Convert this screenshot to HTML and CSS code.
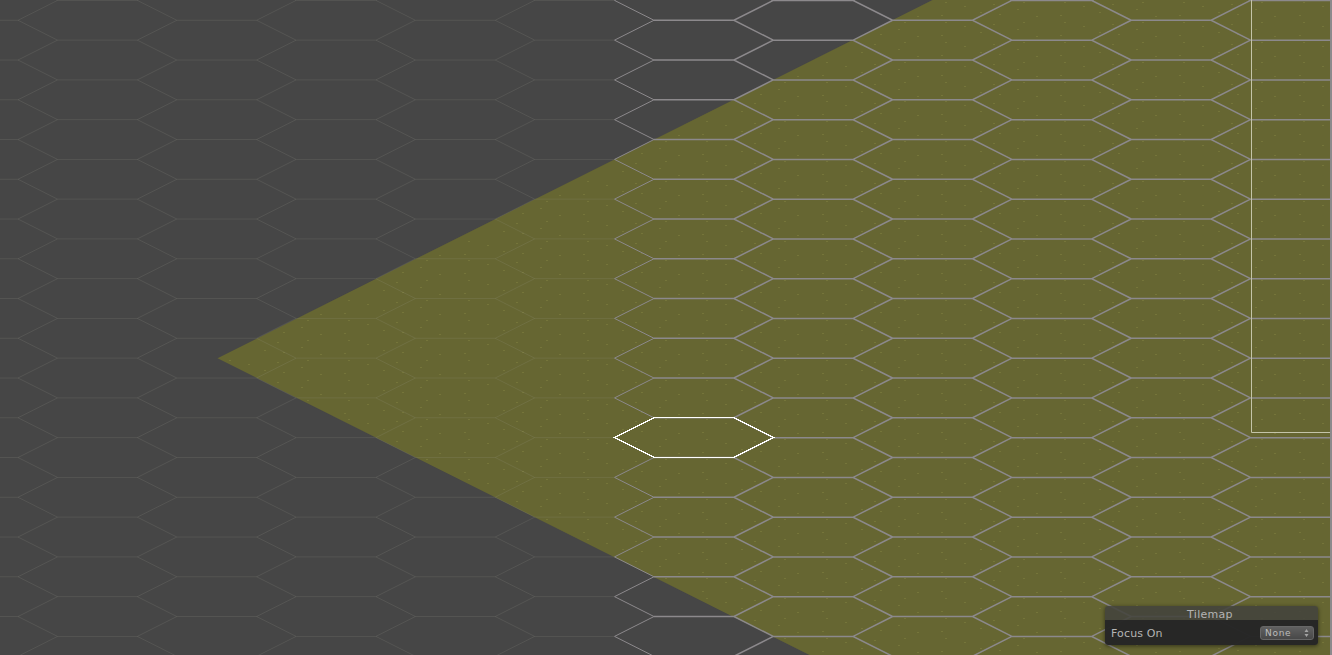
FILE: index.html
```html
<!DOCTYPE html>
<html lang="en">
<head>
<meta charset="utf-8">
<title>Tilemap</title>
<link rel="stylesheet" href="styles.css">
</head>
<body>
<main class="scene">
  <svg class="canvas" width="1332" height="655" viewBox="0 0 1332 655">
    <polygon class="ground" points="217.5,358.2 932.5,0 1332,0 1332,655 809.5,655"/>
    <g id="speckles" class="speckles"></g>
    <path id="grid-faint" class="grid-faint"/>
    <path id="grid-border" class="grid-border"/>
    <path id="grid-main" class="grid-main"/>
    <path class="edge" d="M1331 0V655"/>
    <path class="camera" d="M1251.5 0V432.5H1330"/>
    <path class="cursor" d="M614.5 437.5L654.5 417.5H733.5L773.5 437.5L733.5 457.5H654.5Z"/>
  </svg>
  <section class="panel">
    <h1 class="panel-title">Tilemap</h1>
    <div class="panel-row">
      <span class="label">Focus On</span>
      <button class="dropdown"><span>None</span>
        <svg class="arrows" width="5" height="8" viewBox="0 0 5 8"><path d="M2.5 0L4.5 3H.5ZM.5 5H4.5L2.5 8Z"/></svg>
      </button>
    </div>
  </section>
</main>
<script src="grid.js"></script>
</body>
</html>
```
FILE: styles.css
```css
body { margin: 0; background: #464646; overflow: hidden; }
.scene { position: relative; width: 1332px; height: 655px; overflow: hidden; }
.canvas { display: block; }
.ground { fill: #666632; }
.speckles { fill: #7e7e40; fill-opacity: .6; }
.grid-faint { fill: none; stroke: #a0a096; stroke-opacity: .16; stroke-width: 1; }
.grid-main { fill: none; stroke: #8c898c; stroke-width: 1.5; }
.grid-border { fill: none; stroke: #8c898c; stroke-width: 1; }
.edge { stroke: #8c898c; stroke-width: 2; }
.camera { fill: none; stroke: #c4c4a8; stroke-width: 1; }
.cursor { fill: none; stroke: #fff; stroke-width: 1; shape-rendering: crispEdges; }
.panel {
  position: absolute; left: 1105px; top: 606px; width: 213px; height: 39px;
  border-radius: 3px; box-shadow: 0 1px 4px rgba(0,0,0,.5);
  font-family: "DejaVu Sans", sans-serif; color: #b4b4b4;
}
.panel-title {
  margin: 0; height: 14px; box-sizing: border-box; padding: 1px 3px 0 0;
  border-radius: 3px 3px 0 0; background: rgba(67,67,60,.88);
  font-size: 11px; line-height: 15px; font-weight: 400; letter-spacing: .3px; text-align: center;
}
.panel-row {
  display: flex; align-items: center; justify-content: space-between;
  height: 25px; box-sizing: border-box; padding: 1px 4px 0 6px;
  background: rgba(38,38,38,.98); border-radius: 0 0 3px 3px;
}
.label { font-size: 11px; letter-spacing: .15px; }
.dropdown {
  display: flex; align-items: center; justify-content: space-between;
  width: 54px; height: 14px; box-sizing: border-box; padding: 0 4px;
  border: 1px solid #676767; border-radius: 3px;
  background: linear-gradient(#606060, #484848); color: #bcbcbc;
  font: 9px/12px "DejaVu Sans", sans-serif; letter-spacing: .7px;
}
.arrows { fill: #a4a4a4; }
```
FILE: grid.js
```js
const stepX = 119.3, stepY = 39.75, originX = 614.5, originY = 0.4;

// Each column draws the left chevrons and the flat edges of its hexagons.
function hexColumns(from, to, cut) {
  let flats = "", chevrons = "", border = "";
  for (let c = from; c <= to; c++) {
    const x = originX + c * stepX;
    const y0 = originY + (Math.abs(c) % 2) * stepY / 2;
    for (let r = -2; r < 18; r++) {
      const y = y0 + r * stepY;
      const chevron = `M${x + 39.5} ${y - stepY / 2}L${x} ${y}L${x + 39.5} ${y + stepY / 2}`;
      if (c === 0) border += chevron; else chevrons += chevron;
      flats += `M${x + 39.5} ${y + stepY / 2}H${Math.min(x + stepX, cut)}`;
    }
  }
  return { inner: flats + chevrons, border };
}
const main = hexColumns(0, 5, 1330);
document.getElementById("grid-faint").setAttribute("d", hexColumns(-6, -1, 614).inner);
document.getElementById("grid-main").setAttribute("d", main.inner);
document.getElementById("grid-border").setAttribute("d", main.border);

// Ground texture marks repeat once per tile.
const marks = [[12,2],[31,6],[47,12],[60,4],[66,14],[84,9],[90,2],[103,16],[8,15]];
let dots = "";
for (let c = 0; c < 10; c++) for (let r = 0; r < 34; r++) for (const [mx, my] of marks) {
  const x = Math.round(217 + c * stepX + mx), y = Math.round(r * stepY / 2 + my);
  if (x < 1329 && Math.abs(y - 358) < (x - 222) / 2)
    dots += `<rect x="${x}" y="${y}" width="2" height="1"/>`;
}
document.getElementById("speckles").innerHTML = dots;
```
